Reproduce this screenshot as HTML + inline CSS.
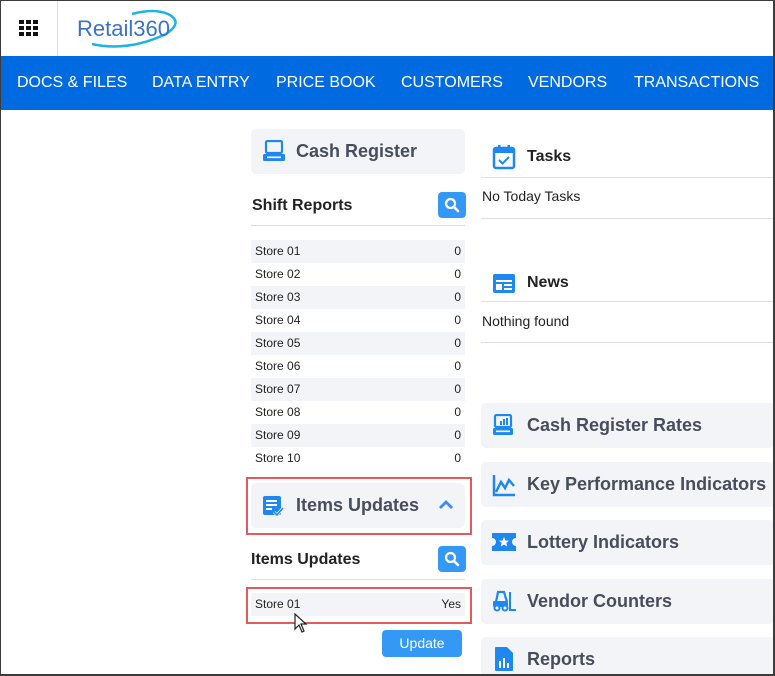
<!DOCTYPE html>
<html><head><meta charset="utf-8"><style>
*{margin:0;padding:0;box-sizing:border-box}
html,body{width:775px;height:676px;overflow:hidden}
body{background:#fff;font-family:"Liberation Sans",Arial,sans-serif;position:relative}
.frame{position:absolute;left:0;top:0;width:775px;height:676px;border:1px solid #3c3c3c;border-right-width:2px;border-bottom-width:2px;z-index:10;pointer-events:none}
.a{position:absolute}
.nav{left:0;top:56px;width:775px;height:54px;background:#006be0;color:#fff;font-size:16px}
.nav span{position:absolute;top:18px}
.card{background:#f3f4f7;border-radius:5px}
.ttl{font-weight:bold;color:#474d5b;font-size:18px}
.row{left:251px;width:214px;height:23px;font-size:12px;color:#222;line-height:22px;padding:0 4px}
.row b{font-weight:normal;float:right}
.g{background:#f3f4f7}
.srch{width:28px;height:26px;background:#3399f5;border-radius:4px}
.red{border:2px solid #e15b5e}
</style></head><body>
<div class="frame"></div>
<div class="a" style="left:57px;top:0;width:1px;height:56px;background:#ddd"></div>
<svg class="a" style="left:19px;top:20px" width="19" height="17" viewBox="0 0 19 17"><g fill="#111"><rect x="0" y="0" width="5" height="4"/><rect x="7" y="0" width="5" height="4"/><rect x="14" y="0" width="5" height="4"/><rect x="0" y="6" width="5" height="4"/><rect x="7" y="6" width="5" height="4"/><rect x="14" y="6" width="5" height="4"/><rect x="0" y="12" width="5" height="4"/><rect x="7" y="12" width="5" height="4"/><rect x="14" y="12" width="5" height="4"/></g></svg>
<svg class="a" style="left:88px;top:8px" width="92" height="40" viewBox="0 0 92 40"><path d="M4 36 Q40 44 78 26 Q96 14 80 6 Q66 0 44 6" fill="none" stroke="#1fb3e4" stroke-width="2.5"/></svg>
<div class="a" style="left:77px;top:16px;font-size:22px;color:#3a72c7">Retail360</div>
<div class="a nav"><span style="left:17px">DOCS &amp; FILES</span><span style="left:152px">DATA ENTRY</span><span style="left:276px">PRICE BOOK</span><span style="left:401px">CUSTOMERS</span><span style="left:528px">VENDORS</span><span style="left:634px">TRANSACTIONS</span></div>
<div class="a card" style="left:251px;top:129px;width:214px;height:45px"></div>
<svg class="a" style="left:262px;top:140px" width="24" height="22" viewBox="0 0 24 22"><rect x="4" y="1" width="16" height="12" rx="1.5" fill="none" stroke="#1e88f0" stroke-width="2.2"/><rect x="1" y="14" width="22" height="7" rx="1.5" fill="#1e88f0"/><rect x="5" y="16.5" width="14" height="1.6" fill="#fff"/></svg>
<div class="a ttl" style="left:296px;top:141px">Cash Register</div>
<div class="a" style="left:252px;top:197px;font-size:16px;font-weight:bold;color:#222">Shift Reports</div>
<div class="a srch" style="left:438px;top:192px"></div>
<svg class="a" style="left:444px;top:197px" width="16" height="16" viewBox="0 0 16 16"><circle cx="6.5" cy="6.5" r="4.5" fill="none" stroke="#fff" stroke-width="2.2"/><path d="M10 10 L14 14" stroke="#fff" stroke-width="2.6" stroke-linecap="round"/></svg>
<div class="a" style="left:251px;top:225px;width:214px;height:1px;background:#dcdfe4"></div>
<div class="a row g" style="top:240px">Store 01<b>0</b></div>
<div class="a row" style="top:263px">Store 02<b>0</b></div>
<div class="a row g" style="top:286px">Store 03<b>0</b></div>
<div class="a row" style="top:309px">Store 04<b>0</b></div>
<div class="a row g" style="top:332px">Store 05<b>0</b></div>
<div class="a row" style="top:355px">Store 06<b>0</b></div>
<div class="a row g" style="top:378px">Store 07<b>0</b></div>
<div class="a row" style="top:401px">Store 08<b>0</b></div>
<div class="a row g" style="top:424px">Store 09<b>0</b></div>
<div class="a row" style="top:447px">Store 10<b>0</b></div>
<div class="a red" style="left:246px;top:477px;width:226px;height:58px"></div>
<div class="a card" style="left:251px;top:483px;width:214px;height:45px"></div>
<svg class="a" style="left:262px;top:495px" width="22" height="22" viewBox="0 0 22 22"><rect x="1" y="1" width="18" height="19" rx="2" fill="#1e88f0"/><rect x="4" y="5" width="11" height="2" fill="#fff"/><rect x="4" y="9" width="11" height="2" fill="#fff"/><rect x="4" y="13" width="6" height="2" fill="#fff"/><path d="M12 17 L15 20 L21 13" fill="none" stroke="#fff" stroke-width="3"/><path d="M12 17 L15 20 L21 13" fill="none" stroke="#1e88f0" stroke-width="1.6"/></svg>
<div class="a ttl" style="left:296px;top:495px">Items Updates</div>
<svg class="a" style="left:438px;top:499px" width="16" height="11" viewBox="0 0 16 11"><path d="M2 9 L8 3 L14 9" fill="none" stroke="#3b8cf5" stroke-width="2.8"/></svg>
<div class="a" style="left:251px;top:551px;font-size:16px;font-weight:bold;color:#222">Items Updates</div>
<div class="a srch" style="left:438px;top:546px"></div>
<svg class="a" style="left:444px;top:551px" width="16" height="16" viewBox="0 0 16 16"><circle cx="6.5" cy="6.5" r="4.5" fill="none" stroke="#fff" stroke-width="2.2"/><path d="M10 10 L14 14" stroke="#fff" stroke-width="2.6" stroke-linecap="round"/></svg>
<div class="a" style="left:251px;top:579px;width:214px;height:1px;background:#dcdfe4"></div>
<div class="a red" style="left:246px;top:587px;width:226px;height:37px"></div>
<div class="a row g" style="top:593px">Store 01<b>Yes</b></div>
<svg class="a" style="left:294px;top:613px" width="14" height="22" viewBox="0 0 14 22"><path d="M1 1 L1 16 L5 12 L8 19 L10 18 L7 11 L12 11 Z" fill="#fff" stroke="#222" stroke-width="1.2"/></svg>
<div class="a" style="left:382px;top:630px;width:80px;height:27px;background:#3399f5;border-radius:4px;color:#fff;font-size:14px;text-align:center;line-height:27px">Update</div>
<svg class="a" style="left:492px;top:144px" width="24" height="26" viewBox="0 0 24 26"><rect x="2" y="4" width="20" height="20" rx="2" fill="none" stroke="#1e88f0" stroke-width="2.5"/><rect x="2" y="4" width="20" height="5" fill="#1e88f0"/><rect x="6" y="1" width="2.5" height="5" fill="#1e88f0"/><rect x="15.5" y="1" width="2.5" height="5" fill="#1e88f0"/><path d="M7 16 L10.5 19.5 L17 13" fill="none" stroke="#1e88f0" stroke-width="2"/></svg>
<div class="a" style="left:527px;top:148px;font-size:16px;font-weight:bold;color:#222">Tasks</div>
<div class="a" style="left:481px;top:177px;width:294px;height:1px;background:#dcdfe4"></div>
<div class="a" style="left:482px;top:188px;font-size:14px;color:#222">No Today Tasks</div>
<div class="a" style="left:481px;top:218px;width:294px;height:1px;background:#dcdfe4"></div>
<svg class="a" style="left:492px;top:272px" width="24" height="22" viewBox="0 0 24 22"><rect x="1" y="2" width="22" height="19" rx="2" fill="#1e88f0"/><rect x="4" y="8" width="16" height="2" fill="#fff"/><rect x="4" y="12" width="6" height="6" fill="#fff"/><rect x="12" y="12" width="8" height="2" fill="#fff"/><rect x="12" y="16" width="8" height="2" fill="#fff"/></svg>
<div class="a" style="left:527px;top:274px;font-size:16px;font-weight:bold;color:#222">News</div>
<div class="a" style="left:481px;top:301px;width:294px;height:1px;background:#dcdfe4"></div>
<div class="a" style="left:482px;top:313px;font-size:14px;color:#222">Nothing found</div>
<div class="a" style="left:481px;top:342px;width:294px;height:1px;background:#dcdfe4"></div>
<div class="a card" style="left:481px;top:403px;width:294px;height:45px"></div>
<svg class="a" style="left:492px;top:414px" width="22" height="22" viewBox="0 0 22 22"><rect x="3" y="1" width="16" height="12" rx="1.5" fill="none" stroke="#1e88f0" stroke-width="2.2"/><rect x="8" y="7" width="2" height="4" fill="#1e88f0"/><rect x="11" y="5" width="2" height="6" fill="#1e88f0"/><rect x="14" y="4" width="2" height="7" fill="#1e88f0"/><rect x="1" y="14" width="20" height="7" rx="1.5" fill="#1e88f0"/><rect x="4" y="16.5" width="14" height="1.6" fill="#fff"/></svg>
<div class="a ttl" style="left:527px;top:415px">Cash Register Rates</div>
<div class="a card" style="left:481px;top:462px;width:294px;height:45px"></div>
<svg class="a" style="left:492px;top:473px" width="24" height="24" viewBox="0 0 24 24"><path d="M2 2 V22 H23" fill="none" stroke="#1e88f0" stroke-width="2.5"/><path d="M4 19 L9 9 L13 15 L17 7 L22 13" fill="none" stroke="#1e88f0" stroke-width="2.5"/></svg>
<div class="a ttl" style="left:527px;top:474px">Key Performance Indicators</div>
<div class="a card" style="left:481px;top:520px;width:294px;height:45px"></div>
<svg class="a" style="left:492px;top:533px" width="24" height="18" viewBox="0 0 24 18"><path d="M0 0 H24 V5 A4 4 0 0 0 24 13 V18 H0 V13 A4 4 0 0 0 0 5 Z" fill="#1e88f0"/><path d="M12 4 L13.5 7.5 L17 7.7 L14.3 10 L15.2 13.5 L12 11.5 L8.8 13.5 L9.7 10 L7 7.7 L10.5 7.5 Z" fill="#fff"/></svg>
<div class="a ttl" style="left:527px;top:532px">Lottery Indicators</div>
<div class="a card" style="left:481px;top:579px;width:294px;height:45px"></div>
<svg class="a" style="left:492px;top:590px" width="24" height="22" viewBox="0 0 24 22"><path d="M4 12 L6 2 H12 L15 12" fill="none" stroke="#1e88f0" stroke-width="2.2"/><rect x="1" y="11" width="15" height="6" rx="1" fill="#1e88f0"/><circle cx="5" cy="18" r="2.5" fill="#fff" stroke="#1e88f0" stroke-width="2"/><circle cx="13" cy="18" r="2.5" fill="#fff" stroke="#1e88f0" stroke-width="2"/><path d="M18 2 V20 H24" fill="none" stroke="#1e88f0" stroke-width="2"/></svg>
<div class="a ttl" style="left:527px;top:591px">Vendor Counters</div>
<div class="a card" style="left:481px;top:637px;width:294px;height:39px;border-bottom-left-radius:0;border-bottom-right-radius:0"></div>
<svg class="a" style="left:494px;top:646px" width="20" height="26" viewBox="0 0 20 26"><path d="M2 1 H13 L19 7 V24 A1 1 0 0 1 18 25 H2 A1 1 0 0 1 1 24 V2 A1 1 0 0 1 2 1Z" fill="#1e88f0"/><rect x="5" y="15" width="2" height="7" fill="#fff"/><rect x="9" y="12" width="2" height="10" fill="#fff"/><rect x="13" y="17" width="2" height="5" fill="#fff"/></svg>
<div class="a ttl" style="left:527px;top:649px">Reports</div>
</body></html>
